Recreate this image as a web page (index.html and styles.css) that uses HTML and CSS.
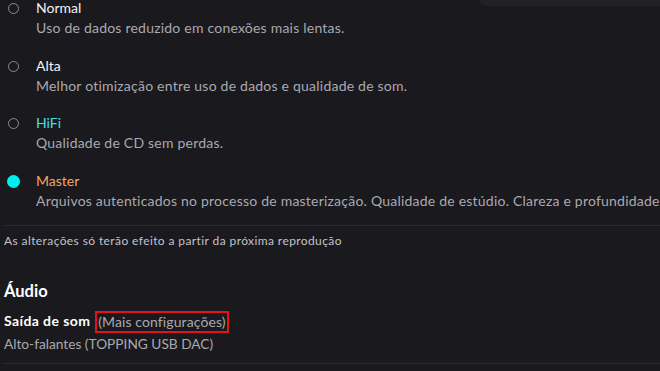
FILE: index.html
```html
<!DOCTYPE html>
<html lang="pt-BR">
<head>
<meta charset="utf-8">
<link rel="stylesheet" href="styles.css">
</head>
<body>
<div class="panel-edge"></div>
<main class="settings">
  <ul class="options">
    <li class="option">
      <span class="radio"></span>
      <div class="option-text">
        <div class="title">Normal</div>
        <div class="desc">Uso de dados reduzido em conexões mais lentas.</div>
      </div>
    </li>
    <li class="option">
      <span class="radio"></span>
      <div class="option-text">
        <div class="title">Alta</div>
        <div class="desc">Melhor otimização entre uso de dados e qualidade de som.</div>
      </div>
    </li>
    <li class="option">
      <span class="radio"></span>
      <div class="option-text">
        <div class="title hifi">HiFi</div>
        <div class="desc">Qualidade de CD sem perdas.</div>
      </div>
    </li>
    <li class="option">
      <span class="radio checked"></span>
      <div class="option-text">
        <div class="title master">Master</div>
        <div class="desc">Arquivos autenticados no processo de masterização. Qualidade de estúdio. Clareza e profundidade</div>
      </div>
    </li>
  </ul>
  <p class="note">As alterações só terão efeito a partir da próxima reprodução</p>
  <section class="audio">
    <h2 class="section-title">Áudio</h2>
    <div class="output-row">
      <span class="label">Saída de som</span>
      <span class="more">(Mais configurações)</span>
    </div>
    <div class="device">Alto-falantes (TOPPING USB DAC)</div>
  </section>
</main>
</body>
</html>
```

FILE: styles.css
```css
html, body {
  margin: 0;
  padding: 0;
  background: #1a191e;
  height: 100%;
  overflow: hidden;
}
body {
  font-family: Lato, "Open Sans", sans-serif;
  color: #f2f2f4;
  position: relative;
}
.panel-edge {
  position: absolute;
  top: -10px;
  left: 478px;
  right: 0;
  height: 16px;
  background: #222127;
  border-bottom-left-radius: 9px;
}
.settings {
  padding-left: 4px;
}
.options {
  list-style: none;
  margin: -2px 0 0 0;
  padding: 0 0 14px 4px;
  display: grid;
  row-gap: 17.5px;
  border-bottom: 1px solid #2c2b31;
}
.option {
  display: flex;
  align-items: flex-start;
  gap: 17px;
}
.radio {
  flex: none;
  width: 9px;
  height: 9px;
  border: 1px solid #8d8c93;
  border-radius: 50%;
  margin-top: 5px;
}
.radio.checked {
  width: 13px;
  height: 13px;
  border: none;
  background: #00f0f0;
  margin-top: 4px;
  margin-left: -1px;
  margin-right: -1px;
}
.option-text {
  min-width: 0;
  white-space: nowrap;
  overflow: hidden;
}
.title {
  font-size: 14px;
  line-height: 20px;
  color: #f2f2f4;
}
.title.hifi { color: #3ee0e6; }
.title.master { color: #f4a462; }
.desc {
  font-size: 14px;
  line-height: 20px;
  color: #a9a9b0;
  letter-spacing: 0.22px;
}
.note {
  margin: 0;
  padding-top: 7px;
  font-size: 12px;
  line-height: 16px;
  color: #c3c3c8;
  letter-spacing: 0.4px;
}
.audio {
  margin-top: 32px;
  padding-bottom: 9px;
  border-bottom: 1px solid #2c2b31;
}
.section-title {
  margin: 0;
  font-size: 16.5px;
  line-height: 20px;
  font-weight: 700;
  color: #ffffff;
}
.output-row {
  margin-top: 9px;
  display: flex;
  align-items: baseline;
  gap: 5px;
}
.label {
  font-size: 14px;
  line-height: 20px;
  font-weight: 700;
  color: #ffffff;
  letter-spacing: 0.4px;
}
.more {
  font-size: 14px;
  line-height: 18px;
  color: #a9a9b0;
  border: 2px solid #e3131c;
  padding: 0 1px 0 1px;
  letter-spacing: 0.1px;
  position: relative;
  top: 1px;
}
.device {
  margin-top: 2px;
  font-size: 13.7px;
  line-height: 20px;
  color: #a9a9b0;
}
```
